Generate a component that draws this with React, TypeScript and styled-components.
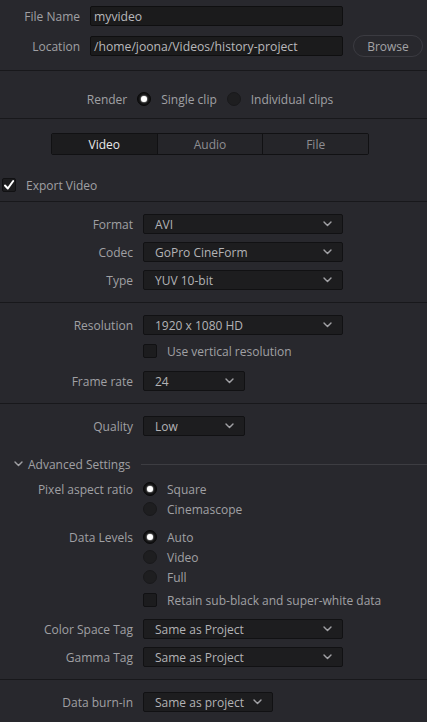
import React from "react";
import styled, { createGlobalStyle } from "styled-components";

const Global = createGlobalStyle`
  html, body { margin: 0; padding: 0; background: #28282d; }
  body { font-family: "Open Sans", "Noto Sans", sans-serif; font-size: 12px; color: #a3a3a6; }
  #root { min-height: 722px; }
`;

const Page = styled.div`
  width: 427px;
  min-height: 722px;
  background: #28282d;
  overflow: hidden;
`;

const Section = styled.div<{ $pt: number; $pb: number; $line?: boolean }>`
  padding: ${(p) => p.$pt}px 0 ${(p) => p.$pb}px;
  border-bottom: ${(p) => (p.$line === false ? "none" : "1px solid #18181b")};
`;

const Row = styled.div<{ $mt?: number; $h?: number; $center?: boolean }>`
  display: flex;
  align-items: center;
  height: ${(p) => p.$h ?? 20}px;
  margin-top: ${(p) => p.$mt ?? 0}px;
  justify-content: ${(p) => (p.$center ? "center" : "flex-start")};
  padding-right: ${(p) => (p.$center ? 7 : 0)}px;
`;

const Label = styled.div<{ $w?: number }>`
  width: ${(p) => p.$w ?? 143}px;
  flex-shrink: 0;
  box-sizing: border-box;
  padding-right: 10px;
  text-align: right;
  color: #a0a0a4;
  white-space: nowrap;
`;

const TextInput = styled.div`
  width: 253px;
  height: 20px;
  box-sizing: border-box;
  background: #1b1b1c;
  border: 1px solid #0f0f10;
  border-radius: 2px;
  padding: 0 3px;
  display: flex;
  align-items: center;
  color: #b8b8bb;
  font-size: 12.2px;
  white-space: nowrap;
`;

const BrowseButton = styled.div`
  margin-left: 10px;
  width: 70px;
  height: 22px;
  box-sizing: border-box;
  border: 1px solid #3b3b41;
  border-radius: 11px;
  display: flex;
  align-items: center;
  justify-content: center;
  color: #a3a3a6;
  font-size: 12px;
`;

const Dropdown = styled.div<{ $w: number }>`
  width: ${(p) => p.$w}px;
  height: 20px;
  box-sizing: border-box;
  background: #1d1d1f;
  border: 1px solid #111113;
  border-radius: 2px;
  padding: 0 10px 0 11px;
  display: flex;
  align-items: center;
  justify-content: space-between;
  color: #b3b3b6;
  white-space: nowrap;
`;

const RadioDot = styled.span<{ $on?: boolean }>`
  width: 14px;
  height: 14px;
  box-sizing: border-box;
  border-radius: 50%;
  flex-shrink: 0;
  background: ${(p) => (p.$on ? "#121213" : "#1e1e20")};
  border: 1px solid ${(p) => (p.$on ? "#0a0a0a" : "#19191b")};
  display: flex;
  align-items: center;
  justify-content: center;
  &::after {
    content: "";
    display: ${(p) => (p.$on ? "block" : "none")};
    width: 6px;
    height: 6px;
    border-radius: 50%;
    background: #ffffff;
    box-shadow: 0 0 1.5px 0.5px rgba(220, 220, 220, 0.7);
  }
`;

const OptionText = styled.span<{ $ml?: number; $mr?: number }>`
  margin-left: ${(p) => p.$ml ?? 10}px;
  margin-right: ${(p) => p.$mr ?? 0}px;
  color: #a0a0a4;
  white-space: nowrap;
`;

const Box = styled.span`
  width: 14px;
  height: 14px;
  box-sizing: border-box;
  flex-shrink: 0;
  background: #1c1c1e;
  border: 1px solid #111113;
  border-radius: 2px;
  display: flex;
  align-items: center;
  justify-content: center;
`;

const Tabs = styled.div`
  display: flex;
  width: 318px;
  height: 22px;
  box-sizing: border-box;
  border: 1px solid #111113;
  border-radius: 2px;
  overflow: hidden;
`;

const Tab = styled.div<{ $active?: boolean }>`
  flex: 1;
  display: flex;
  align-items: center;
  justify-content: center;
  background: ${(p) => (p.$active ? "#1c1c1e" : "#252529")};
  color: ${(p) => (p.$active ? "#e8e8ea" : "#8e8e92")};
  border-left: 1px solid #111113;
  &:first-child { border-left: none; }
`;

const ExportRow = styled.div`
  display: flex;
  align-items: center;
  height: 16px;
  margin-top: 22px;
  padding-left: 2px;
`;

const AdvHeader = styled.div`
  display: flex;
  align-items: center;
  height: 16px;
  margin-top: 20px;
  padding-left: 14px;
  color: #a0a0a4;
`;

const AdvLine = styled.div`
  flex: 1;
  height: 1px;
  margin-left: 11px;
  background: #3d3d42;
`;

const Chevron = ({ color = "#a0a0a4" }: { color?: string }) => (
  <svg width="9" height="6" viewBox="0 0 9 6" style={{ flexShrink: 0 }}>
    <polyline points="1,1 4.5,4.6 8,1" fill="none" stroke={color} strokeWidth="1.4" strokeLinecap="round" strokeLinejoin="round" />
  </svg>
);

const Check = () => (
  <svg width="12" height="12" viewBox="0 0 12 12">
    <polyline points="2,6.5 4.8,9.5 10.2,2" fill="none" stroke="#ffffff" strokeWidth="2" strokeLinecap="round" strokeLinejoin="round" />
  </svg>
);

const Select = ({ w, value }: { w: number; value: string }) => (
  <Dropdown $w={w}>
    <span>{value}</span>
    <Chevron />
  </Dropdown>
);

const SelectRow = ({ label, w, value, mt }: { label: string; w: number; value: string; mt?: number }) => (
  <Row $mt={mt}>
    <Label>{label}</Label>
    <Select w={w} value={value} />
  </Row>
);

const RadioRow = ({ label, text, on, mt }: { label?: string; text: string; on?: boolean; mt?: number }) => (
  <Row $mt={mt}>
    <Label>{label ?? ""}</Label>
    <RadioDot $on={on} />
    <OptionText>{text}</OptionText>
  </Row>
);

const CheckRow = ({ text, mt }: { text: string; mt?: number }) => (
  <Row $mt={mt}>
    <Label />
    <Box />
    <OptionText>{text}</OptionText>
  </Row>
);

export default function App() {
  return (
    <Page>
      <Global />
      <Section $pt={6} $pb={14}>
        <Row>
          <Label $w={90}>File Name</Label>
          <TextInput>myvideo</TextInput>
        </Row>
        <Row $mt={10}>
          <Label $w={90}>Location</Label>
          <TextInput>/home/joona/Videos/history-project</TextInput>
          <BrowseButton>Browse</BrowseButton>
        </Row>
      </Section>

      <Section $pt={19} $pb={10}>
        <Row $h={18} $center>
          <OptionText $ml={0} $mr={10}>Render</OptionText>
          <RadioDot $on />
          <OptionText $mr={10}>Single clip</OptionText>
          <RadioDot />
          <OptionText>Individual clips</OptionText>
        </Row>
      </Section>

      <Section $pt={14} $pb={8}>
        <Row $h={22} $center>
          <Tabs>
            <Tab $active>Video</Tab>
            <Tab>Audio</Tab>
            <Tab>File</Tab>
          </Tabs>
        </Row>
        <ExportRow>
          <Box>
            <Check />
          </Box>
          <OptionText>Export Video</OptionText>
        </ExportRow>
      </Section>

      <Section $pt={12} $pb={12}>
        <SelectRow label="Format" w={200} value="AVI" />
        <SelectRow label="Codec" w={200} value="GoPro CineForm" mt={8} />
        <SelectRow label="Type" w={200} value="YUV 10-bit" mt={8} />
      </Section>

      <Section $pt={12} $pb={12}>
        <SelectRow label="Resolution" w={200} value="1920 x 1080 HD" />
        <CheckRow text="Use vertical resolution" mt={6} />
        <SelectRow label="Frame rate" w={102} value="24" mt={10} />
      </Section>

      <Section $pt={12} $pb={12}>
        <SelectRow label="Quality" w={102} value="Low" />
        <AdvHeader>
          <Chevron />
          <OptionText $ml={5}>Advanced Settings</OptionText>
          <AdvLine />
        </AdvHeader>
        <RadioRow label="Pixel aspect ratio" text="Square" on mt={7} />
        <RadioRow text="Cinemascope" />
        <RadioRow label="Data Levels" text="Auto" on mt={8} />
        <RadioRow text="Video" />
        <RadioRow text="Full" />
        <CheckRow text="Retain sub-black and super-white data" mt={3} />
        <SelectRow label="Color Space Tag" w={200} value="Same as Project" mt={9} />
        <SelectRow label="Gamma Tag" w={200} value="Same as Project" mt={8} />
      </Section>

      <Section $pt={12} $pb={12} $line={false}>
        <SelectRow label="Data burn-in" w={130} value="Same as project" />
      </Section>
    </Page>
  );
}
